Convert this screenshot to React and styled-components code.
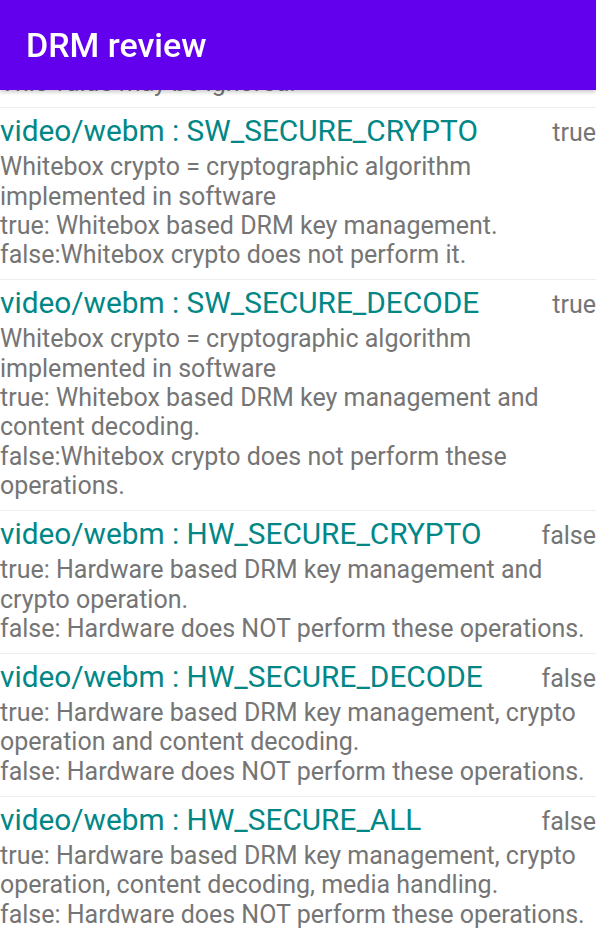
import React from "react";
import styled, { createGlobalStyle } from "styled-components";

const Global = createGlobalStyle`
  html, body { margin: 0; padding: 0; background: #ffffff; }
  body { font-family: Roboto, "Noto Sans", "Liberation Sans", sans-serif; overflow: hidden; }
`;

const AppBar = styled.header`
  position: fixed;
  top: 0;
  left: 0;
  right: 0;
  height: 90px;
  background: #6200ee;
  display: flex;
  align-items: center;
  padding-left: 26px;
  box-shadow: 0 2px 4px rgba(0, 0, 0, 0.22);
  z-index: 2;
`;

const Title = styled.h1`
  margin: 0;
  color: #ffffff;
  font-size: 34px;
  font-weight: 500;
`;

const List = styled.main`
  padding-top: 68px;
  display: flex;
  flex-direction: column;
`;

const Item = styled.section`
  border-top: 1px solid #eeeeee;
  padding: 7px 0 10px;
  display: flex;
  flex-direction: column;
  gap: 5px;
`;

const Row = styled.div`
  display: flex;
  align-items: baseline;
  justify-content: space-between;
  height: 32px;
`;

const Name = styled.div`
  color: #018786;
  font-size: 29.8px;
  line-height: 32px;
  white-space: nowrap;
`;

const Value = styled.div`
  color: #757575;
  font-size: 25px;
  line-height: 32px;
`;

const Desc = styled.div`
  color: #757575;
  font-size: 25px;
  line-height: 29.3px;
  white-space: pre-line;
  padding-bottom: ${(p) => (p.$tail ? 10 : 0)}px;
`;

const items = [
  {
    name: "video/webm : SW_SECURE_CRYPTO",
    value: "true",
    desc: "Whitebox crypto = cryptographic algorithm\nimplemented in software\ntrue: Whitebox based DRM key management.\nfalse:Whitebox crypto does not perform it.",
  },
  {
    name: "video/webm : SW_SECURE_DECODE",
    value: "true",
    desc: "Whitebox crypto = cryptographic algorithm\nimplemented in software\ntrue: Whitebox based DRM key management and\ncontent decoding.\nfalse:Whitebox crypto does not perform these\noperations.",
  },
  {
    name: "video/webm : HW_SECURE_CRYPTO",
    value: "false",
    desc: "true: Hardware based DRM key management and\ncrypto operation.\nfalse: Hardware does NOT perform these operations.",
  },
  {
    name: "video/webm : HW_SECURE_DECODE",
    value: "false",
    desc: "true: Hardware based DRM key management, crypto\noperation and content decoding.\nfalse: Hardware does NOT perform these operations.",
  },
  {
    name: "video/webm : HW_SECURE_ALL",
    value: "false",
    desc: "true: Hardware based DRM key management, crypto\noperation, content decoding, media handling.\nfalse: Hardware does NOT perform these operations.",
  },
];

export default function App() {
  return (
    <>
      <Global />
      <AppBar>
        <Title>DRM review</Title>
      </AppBar>
      <List>
        <Desc $tail>This value may be ignored.</Desc>
        {items.map((it) => (
          <Item key={it.name}>
            <Row>
              <Name>{it.name}</Name>
              <Value>{it.value}</Value>
            </Row>
            <Desc>{it.desc}</Desc>
          </Item>
        ))}
      </List>
    </>
  );
}
